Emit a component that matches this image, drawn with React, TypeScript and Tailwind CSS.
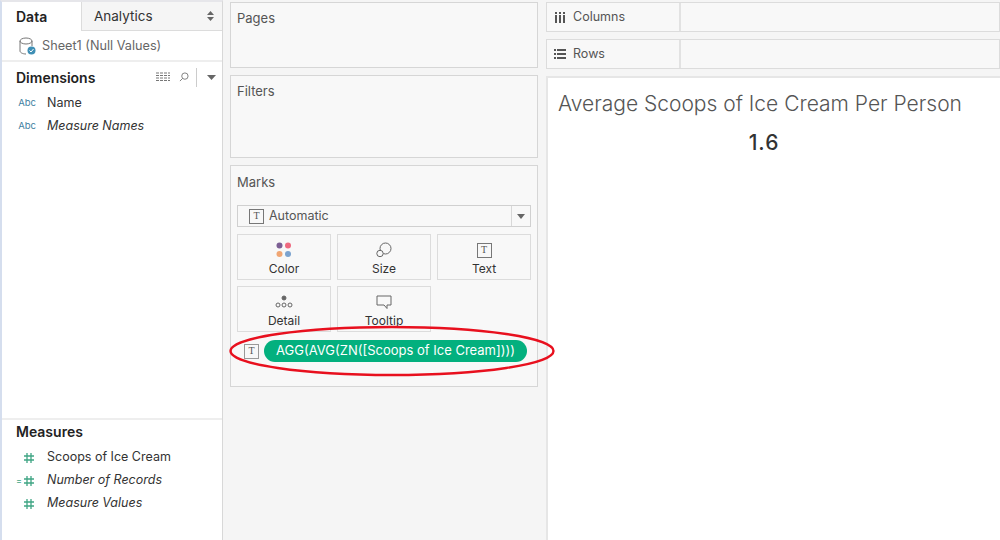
const font = "font-['Inter','Open_Sans',sans-serif]";

const TextIcon = ({ className = "" }: { className?: string }) => (
  <span
    className={`flex h-[15px] w-[15px] items-center justify-center border border-[#777] font-['Liberation_Serif',serif] text-[10px] leading-none text-[#555] ${className}`}
  >
    T
  </span>
);

const Hash = () => (
  <svg width="12" height="12" viewBox="0 0 12 12" stroke="#3fa584" strokeWidth="1.3" fill="none" className="mr-[1px]">
    <path d="M4 1v10M8 1v10M1 4h10M1 8h10" />
  </svg>
);

const FieldRow = ({
  icon,
  label,
  italic,
}: {
  icon: React.ReactNode;
  label: string;
  italic?: boolean;
}) => (
  <div className="flex h-[23px] items-center">
    <span className="flex w-[45px] justify-end pr-[11px]">{icon}</span>
    <span className={`text-[12.5px] text-[#333] ${italic ? "italic" : ""}`}>{label}</span>
  </div>
);

const Abc = () => <span className="text-[9.5px] text-[#3f7f9f]">Abc</span>;

const Card = ({ icon, label }: { icon: React.ReactNode; label: string }) => (
  <div className="flex h-[46px] w-[94px] flex-col items-center border border-[#dcdcdc] bg-[#f8f8f8]">
    <span className="flex h-[26px] items-center pt-[6px]">{icon}</span>
    <span className="text-[12px] leading-[20px] text-[#333]">{label}</span>
  </div>
);

const ShelfBox = ({ title, className }: { title: string; className: string }) => (
  <div className={`border border-[#d6d6d6] bg-[#f8f8f8] px-[6px] pt-[6px] text-[13px] text-[#555] ${className}`}>
    {title}
  </div>
);

const Shelf = ({ icon, label }: { icon: React.ReactNode; label: string }) => (
  <div className="flex h-[30px] border border-[#dcdcdc] bg-[#f8f8f8]">
    <div className="flex w-[134px] items-center gap-[7px] border-r-2 border-[#e2e2e2] pl-[7px] text-[12.5px] text-[#555]">
      {icon}
      {label}
    </div>
    <div className="flex-1" />
  </div>
);

export default function App() {
  return (
    <div className={`relative flex h-[540px] w-[1000px] overflow-hidden bg-[#f5f5f5] ${font}`}>
      <aside className="flex h-full w-[223px] shrink-0 flex-col border-r border-[#d8d8d8] border-l-2 border-l-[#d5deee] border-t-2 border-t-[#e6e6ea] bg-white">
        <div className="flex h-[29px]">
          <div className="flex w-[79px] items-center pl-[14px] text-[14px] font-semibold text-[#222]">Data</div>
          <div className="flex flex-1 items-center justify-between border-b border-l border-[#dcdcdc] bg-[#f5f5f5] pl-[12px] pr-[8px] text-[13.5px] text-[#333]">
            Analytics
            <svg width="7" height="10" viewBox="0 0 7 10" fill="#666">
              <path d="M3.5 0 7 4H0zM3.5 10 0 6h7z" />
            </svg>
          </div>
        </div>
        <div className="flex h-[31px] items-center border-b-2 border-[#eeeeee] pl-[17px] text-[12.7px] text-[#666]">
          <svg width="18" height="20" viewBox="0 0 18 20" fill="none" className="mr-[5px]">
            <ellipse cx="7" cy="5" rx="6" ry="3" stroke="#777" />
            <path d="M1 5v10c0 1.5 2.5 3 6 3M13 5v5" stroke="#777" />
            <circle cx="12.5" cy="14.5" r="4" fill="#3f8fb5" />
            <path d="m10.5 14.5 1.5 1.5 2.5-3" stroke="#fff" />
          </svg>
          Sheet1 (Null Values)
        </div>
        <div className="flex h-[30px] items-center justify-between pl-[14px] pr-[6px]">
          <span className="text-[14px] font-semibold text-[#222]">Dimensions</span>
          <div className="flex items-center">
            <svg width="14" height="10" viewBox="0 0 14 10" stroke="#777" className="mr-[9px]">
              <path d="M0 1h14M0 3.5h14M0 6h14M0 8.5h14" strokeDasharray="3 1" />
            </svg>
            <svg width="10" height="10" viewBox="0 0 11 11" fill="none" stroke="#777" className="mr-[7px]">
              <circle cx="6.5" cy="4.5" r="3.5" />
              <path d="M4 7 1 10" />
            </svg>
            <span className="mr-[10px] h-[19px] w-px bg-[#ccc]" />
            <svg width="9" height="5" viewBox="0 0 9 5" fill="#666">
              <path d="M0 0h9L4.5 5z" />
            </svg>
          </div>
        </div>
        <FieldRow icon={<Abc />} label="Name" />
        <FieldRow icon={<Abc />} label="Measure Names" italic />
        <div className="flex-1" />
        <div className="h-[122px] shrink-0 border-t-2 border-[#eeeeee] bg-white">
          <div className="mb-[1px] flex h-[22px] items-center pl-[14px] text-[14px] font-semibold text-[#222]">Measures</div>
          <div className="pt-[3px]">
            <FieldRow icon={<Hash />} label="Scoops of Ice Cream" />
            <FieldRow
              icon={
                <span className="flex items-center">
                  <span className="mr-[1px] text-[9px] leading-none text-[#3fa584]">=</span>
                  <Hash />
                </span>
              }
              label="Number of Records"
              italic
            />
            <FieldRow icon={<Hash />} label="Measure Values" italic />
          </div>
        </div>
      </aside>

      <section className="flex w-[323px] shrink-0 flex-col gap-[7px] pl-[7px] pr-[8px] pt-[2px]">
        <ShelfBox title="Pages" className="h-[66px]" />
        <ShelfBox title="Filters" className="h-[83px]" />
        <div className="h-[222px] border border-[#d6d6d6] bg-[#f8f8f8] px-[6px] pt-[6px]">
          <div className="text-[13px] leading-[20px] text-[#555]">Marks</div>
          <div className="mt-[13px] flex h-[22px] items-center border border-[#d0d0d0] pl-[11px] text-[12.5px] text-[#555]">
            <TextIcon className="mr-[5px]" />
            Automatic
            <span className="ml-auto flex h-full w-[19px] items-center justify-center border-l border-[#d8d8d8]">
              <svg width="8" height="5" viewBox="0 0 8 5" fill="#666">
                <path d="M0 0h8L4 5z" />
              </svg>
            </span>
          </div>
          <div className="mt-[7px] grid grid-cols-[94px_94px_94px] gap-x-[6px] gap-y-[6px]">
            <Card
              label="Color"
              icon={
                <svg width="16" height="16" viewBox="0 0 16 16">
                  <circle cx="3.5" cy="3.5" r="3" fill="#7c5f94" />
                  <circle cx="12" cy="3.5" r="3" fill="#ef6a80" />
                  <circle cx="3.5" cy="12" r="3" fill="#f0a674" />
                  <circle cx="12" cy="12" r="3" fill="#7ba3cf" />
                </svg>
              }
            />
            <Card
              label="Size"
              icon={
                <svg width="16" height="16" viewBox="0 0 16 16" fill="none" stroke="#666">
                  <circle cx="9.5" cy="6.5" r="5.5" />
                  <circle cx="4" cy="11.5" r="3.2" fill="#f8f8f8" />
                </svg>
              }
            />
            <Card label="Text" icon={<TextIcon />} />
            <Card
              label="Detail"
              icon={
                <svg width="18" height="14" viewBox="0 0 18 14" fill="none" stroke="#666">
                  <circle cx="9" cy="3" r="2" fill="#666" />
                  <circle cx="3" cy="10" r="2" />
                  <circle cx="9" cy="10" r="2" />
                  <circle cx="15" cy="10" r="2" />
                </svg>
              }
            />
            <Card
              label="Tooltip"
              icon={
                <svg width="16" height="15" viewBox="0 0 16 15" fill="none" stroke="#666">
                  <path d="M1 1h14v9h-4v3.5L8 10H1z" strokeLinejoin="round" />
                </svg>
              }
            />
          </div>
          <div className="mt-[8px] flex items-center pl-[7px]">
            <TextIcon className="mr-[5px] border-[#999]" />
            <span className="flex h-[22px] w-[263px] items-center justify-center rounded-full bg-[#03b07e] text-[13px] text-white">
              AGG(AVG(ZN([Scoops of Ice Cream])))
            </span>
          </div>
        </div>
      </section>

      <main className="flex flex-1 flex-col gap-[7px] pt-[2px]">
        <Shelf
          label="Columns"
          icon={
            <svg width="12" height="11" viewBox="0 0 12 11" fill="#555">
              <path d="M1 3h2v8H1zM5 3h2v8H5zM9 3h2v8H9zM1 0h2v2H1zM5 0h2v2H5zM9 0h2v2H9z" />
            </svg>
          }
        />
        <Shelf
          label="Rows"
          icon={
            <svg width="12" height="10" viewBox="0 0 12 10" fill="#555">
              <path d="M0 0h2v2H0zM3 0h9v2H3zM0 4h2v2H0zM3 4h9v2H3zM0 8h2v2H0zM3 8h9v2H3z" />
            </svg>
          }
        />
        <div className="flex-1 border-l-2 border-t-2 border-[#e6e6e6] bg-white pl-[10px] pt-[11px]">
          <div className="text-[21px] font-light leading-[30px] text-[#555]">
            Average Scoops of Ice Cream Per Person
          </div>
          <div className="mt-[10px] w-[412px] text-center text-[21px] font-medium leading-[28px] tracking-[1px] text-[#333]">1.6</div>
        </div>
      </main>

      <svg
        width="328"
        height="52"
        viewBox="0 0 328 52"
        fill="none"
        className="absolute left-[228px] top-[325px]"
      >
        <ellipse cx="164" cy="26" rx="161.5" ry="24" stroke="#e8101e" strokeWidth="2.4" />
      </svg>
    </div>
  );
}
